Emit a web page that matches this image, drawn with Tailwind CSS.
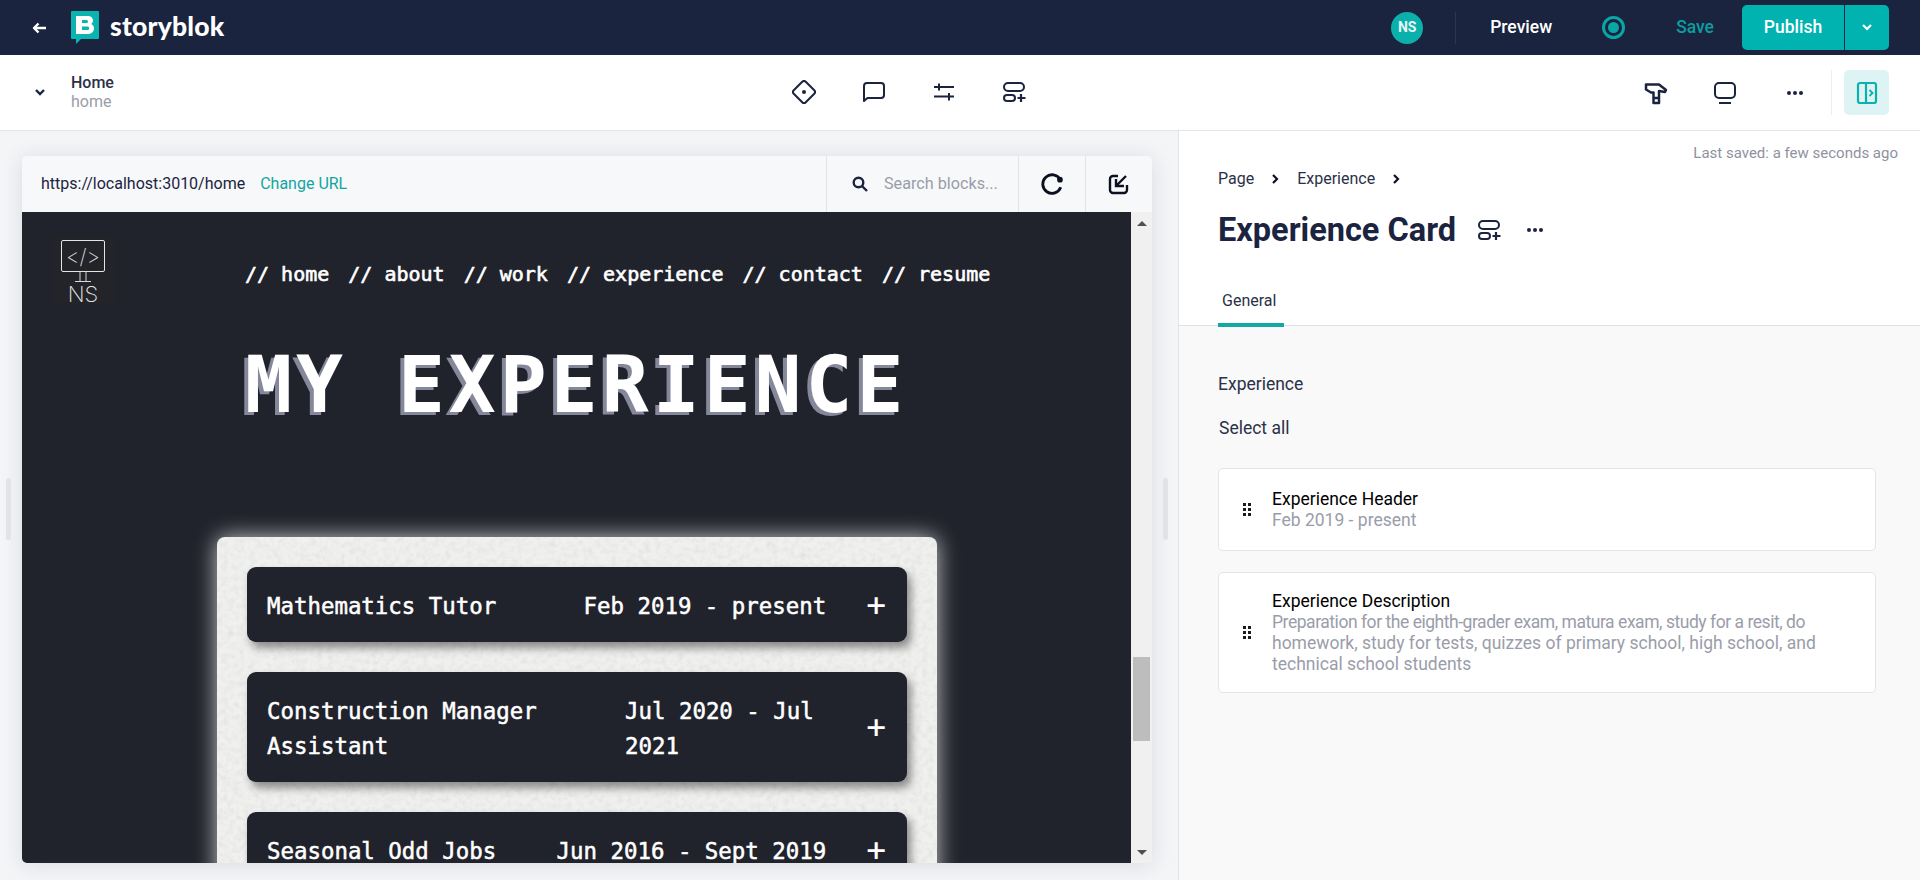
<!DOCTYPE html>
<html lang="en">
<head>
    <meta charset="UTF-8">
    <title>Storyblok - Home</title>
    <script src="https://cdn.jsdelivr.net/npm/@tailwindcss/browser@4"></script>
</head>
<body class="h-[880px] overflow-hidden flex flex-col bg-[#f4f5f7] font-['Roboto',sans-serif] text-[#1b243f]">

    <!-- top bar -->
    <header class="h-[55px] shrink-0 bg-[#1b243f] flex items-center text-white">
        <svg class="ml-[32px] w-[14px] h-[12px]" viewBox="0 0 14 12" fill="none" stroke="white" stroke-width="2.4" stroke-linejoin="round"><path d="M14 6H2M6.500 1.500 2 6l4.500 4.500"/></svg>
        <svg class="ml-[25px] w-[28px] h-[33px]" viewBox="0 0 28 33"><path d="M1 0h26a1 1 0 0 1 1 1v26a1 1 0 0 1-1 1H10l-5 5v-5H1a1 1 0 0 1-1-1V1a1 1 0 0 1 1-1z" fill="#0bb4ae"/><path fill-rule="evenodd" d="M5 5h11.500c3.500 0 5.500 2 5.500 4.500 0 1.500-.7 2.800-1.800 3.500 1.600.7 2.800 2.200 2.800 4.200 0 3-2.300 5.800-6 5.800H5zm6 4v3h4.500a1.500 1.500 0 0 0 0-3zm0 6.500V19h5.500a1.750 1.750 0 0 0 0-3.500z" fill="white"/></svg>
        <span class="ml-[11px] font-['Lato'] font-black text-[26.500px] leading-none tracking-[0.2px] -mt-[2px]">storyblok</span>

        <div class="ml-auto w-[32px] h-[32px] rounded-full bg-[#0bb0ab] flex items-center justify-center text-[14px] font-bold text-[#e6f7f6]">NS</div>
        <div class="ml-[32px] w-px h-[32px] bg-[#2d3650]"></div>
        <span class="ml-[34px] text-[17.500px] font-medium">Preview</span>
        <div class="ml-[50px] w-[23px] h-[23px] rounded-full border-[3px] border-[#0aa5a5] flex items-center justify-center">
            <div class="w-[11px] h-[11px] rounded-full bg-[#0aa5a5]"></div>
        </div>
        <span class="ml-[51px] text-[17.500px] font-medium text-[#0d9c9f]">Save</span>
        <div class="ml-[28px] mr-[31px] h-[45px] flex rounded-[5px] overflow-hidden bg-[#00b3b0]">
            <div class="w-[103px] flex items-center justify-center text-[17.500px] font-medium border-r border-[#1b243f]">Publish</div>
            <div class="w-[44px] flex items-center justify-center">
                <svg class="w-[10px] h-[7px]" viewBox="0 0 10 7" fill="none" stroke="white" stroke-width="2.200"><path d="m1 1 4 4 4-4"/></svg>
            </div>
        </div>
    </header>

    <!-- story bar -->
    <div class="h-[76px] shrink-0 bg-white border-b border-[#e4e5e8] flex items-center relative">
        <svg class="ml-[35px] w-[10px] h-[7px]" viewBox="0 0 10 7" fill="none" stroke="#1b243f" stroke-width="2.400"><path d="m1 1 4 4 4-4"/></svg>
        <div class="ml-[26px] -mt-[2px]">
            <div class="text-[16px] leading-[19px] font-medium text-[#2a3148]">Home</div>
            <div class="text-[16px] leading-[19px] text-[#9a9da9]">home</div>
        </div>
        <div class="ml-[678px] -mt-[2px] flex items-center gap-[46px]">
            <svg class="w-[24px] h-[24px]" viewBox="0 0 24 24" fill="none" stroke="#1b243f" stroke-width="2"><rect x="3.500" y="3.500" width="17" height="17" rx="2.500" transform="rotate(45 12 12)"/><circle cx="12" cy="12" r="2" fill="#1b243f" stroke="none"/></svg>
            <svg class="w-[24px] h-[24px]" viewBox="0 0 24 24" fill="none" stroke="#1b243f" stroke-width="2" stroke-linejoin="round"><path d="M2 21V6a3 3 0 0 1 3-3h14a3 3 0 0 1 3 3v9a3 3 0 0 1-3 3H5.500z"/></svg>
            <svg class="w-[24px] h-[24px]" viewBox="0 0 24 24" fill="none" stroke="#1b243f" stroke-width="2"><path d="M2 7h20M7 3.500v7M2 16.500h20M17 13v7.500"/></svg>
            <svg class="w-[24px] h-[24px]" viewBox="0 0 24 24" fill="none" stroke="#1b243f" stroke-width="2"><rect x="2" y="3" width="20" height="8" rx="4"/><rect x="2" y="15" width="11" height="6" rx="3"/><path d="M19 14v8M15.500 18h8" stroke-width="2.200"/></svg>
        </div>
        <div class="ml-auto mr-[31px] flex items-center">
            <svg class="w-[24px] h-[24px]" viewBox="0 0 24 24" fill="none" stroke="#1b243f" stroke-width="2.500" stroke-linejoin="round"><path d="M2 3.500h13l7 5.500-1 2-6-1v12H9.500V11.500H7L2 8.500zM9.500 17H15" /></svg>
            <svg class="ml-[45px] w-[24px] h-[24px]" viewBox="0 0 24 24" fill="none" stroke="#1b243f" stroke-width="2"><rect x="2" y="2" width="20" height="15" rx="4"/><path d="M6 22h12"/></svg>
            <svg class="ml-[50px] w-[16px] h-[4px]" viewBox="0 0 16 4" fill="#1b243f"><circle cx="2" cy="2" r="2"/><circle cx="8" cy="2" r="2"/><circle cx="14" cy="2" r="2"/></svg>
            <div class="ml-[28px] w-px h-[45px] bg-[#eceef0]"></div>
            <div class="ml-[12px] w-[45px] h-[45px] rounded-[5px] bg-[#def3f3] flex items-center justify-center">
                <svg class="w-[22px] h-[24px]" viewBox="0 0 22 24" fill="none" stroke="#0cb0ad" stroke-width="2.200"><rect x="2" y="2" width="18" height="20" rx="2"/><path d="M10 2v20"/><path d="m13.500 9 3 3-3 3" stroke-width="1.800"/></svg>
            </div>
        </div>
    </div>

    <div class="flex-1 flex min-h-0">
        <!-- preview -->
        <main class="w-[1178px] shrink-0 pl-[22px] pt-[25px] relative">
            <div class="absolute left-[6px] top-[347px] w-[5px] h-[62px] rounded bg-[#e2e3e5]"></div>
            <div class="absolute left-[1163px] top-[347px] w-[5px] h-[62px] rounded bg-[#e2e3e5]"></div>
            <div class="w-[1130px] h-[707px] rounded-[5px] overflow-hidden flex flex-col shadow-[0_2px_22px_rgba(27,36,63,0.12)]">
                <div class="h-[56px] shrink-0 bg-[#f7f8fa] flex items-center text-[16px]">
                    <span class="ml-[19px] text-[#1b243f]">https://localhost:3010/home</span>
                    <span class="ml-[15px] text-[#12a5a0]">Change URL</span>
                    <div class="ml-auto h-full w-[192px] border-l border-[#e2e4e8] flex items-center">
                        <svg class="ml-[25px] w-[16px] h-[16px]" viewBox="0 0 16 16" fill="none" stroke="#1b243f" stroke-width="2.400"><circle cx="6.500" cy="6.500" r="4.800"/><path d="m10 10 5 5"/></svg>
                        <span class="ml-[16px] text-[16.200px] text-[#9a9da9]">Search blocks...</span>
                    </div>
                    <div class="h-full w-[67px] border-l border-[#e2e4e8] flex items-center justify-center">
                        <svg class="w-[24px] h-[24px]" viewBox="0 0 22 22" fill="none" stroke="#0d1020" stroke-width="2.600"><path d="M18.500 7A8.500 8.500 0 1 0 19 14"/><circle cx="18.300" cy="7" r="2.600" fill="#0d1020" stroke="none"/></svg>
                    </div>
                    <div class="h-full w-[67px] border-l border-[#e2e4e8] flex items-center justify-center">
                        <svg class="w-[22px] h-[22px]" viewBox="0 0 22 22" fill="none" stroke="#0d1020" stroke-width="2.400"><path d="M10 3H5a3 3 0 0 0-3 3v11a3 3 0 0 0 3 3h11a3 3 0 0 0 3-3v-5"/><path d="M18 3 9 12M8 6v7h8"/></svg>
                    </div>
                </div>

                <div class="h-[651px] flex">
                    <div class="w-[1109px] bg-[#21232c] overflow-hidden font-['DejaVu_Sans_Mono',monospace] text-white">
                        <div class="flex">
                            <div class="ml-[30px] mt-[23px] w-[62px] h-[70px] bg-[#23232a] flex flex-col items-center pt-[5px]">
                                <div class="w-[44px] h-[32px] border border-[#e4e4e4] rounded-[2px] flex items-center justify-center text-[#d8d8d8] font-['Inter'] font-extralight text-[21px] leading-none">&lt;/&gt;</div>
                                <svg class="w-[16px] h-[10px]" viewBox="0 0 16 10" fill="none" stroke="#d8d8d8"><path d="M5 0v9M11 0v9M0 9.500h16"/></svg>
                                <div class="mt-[1px] font-['Inter'] font-extralight text-[#e4e4e4] text-[22px] leading-[22px]">NS</div>
                            </div>
                            <nav class="ml-[131px] mt-[50px] flex gap-[19px] text-[20px] leading-[24px] font-medium [-webkit-text-stroke:0.6px_white] h-[24px]">
                                <span>// home</span><span>// about</span><span>// work</span><span>// experience</span><span>// contact</span><span>// resume</span>
                            </nav>
                        </div>
                        <h1 class="ml-[223px] mt-[35px] text-[78px] leading-[90px] font-bold tracking-[4px] [text-shadow:-4px_3px_0_#85889a]">MY EXPERIENCE</h1>

                        <div class="ml-[195px] mt-[107px] w-[720px] h-[400px] relative rounded-t-[8px] bg-[#f0f0ef] shadow-[0_0_22px_rgba(255,255,255,0.75)] px-[30px] pt-[30px] flex flex-col gap-[30px]">
                            <svg class="absolute inset-0 w-full h-full rounded-t-[8px] opacity-60" aria-hidden="true">
                                <filter id="concrete"><feTurbulence type="fractalNoise" baseFrequency="0.18" numOctaves="6" seed="11"/><feColorMatrix values="0 0 0 0 0.55  0 0 0 0 0.55  0 0 0 0 0.55  0.6 0.6 0 0 -0.5"/></filter>
                                <rect width="100%" height="100%" filter="url(#concrete)"/>
                            </svg>
                            <div class="relative h-[75px] shrink-0 rounded-[9px] bg-[#21232c] shadow-[4px_6px_9px_rgba(0,0,0,0.42)] px-[20px] pt-[3px] flex items-center text-[22.400px] leading-[35px] font-medium [-webkit-text-stroke:0.5px_white]">
                                <span>Mathematics Tutor</span>
                                <span class="ml-auto">Feb 2019 - present</span>
                                <span class="ml-[38px] -mt-[7px] mr-[-1px] font-['Inter'] font-normal text-[36px] leading-none [-webkit-text-stroke:0]">+</span>
                            </div>
                            <div class="relative h-[110px] shrink-0 rounded-[9px] bg-[#21232c] shadow-[4px_6px_9px_rgba(0,0,0,0.42)] px-[20px] pt-[3px] flex items-center text-[22.400px] leading-[35px] font-medium [-webkit-text-stroke:0.5px_white]">
                                <span class="w-[358px]">Construction Manager Assistant</span>
                                <span class="w-[205px]">Jul 2020 - Jul 2021</span>
                                <span class="ml-auto -mt-[7px] mr-[-1px] font-['Inter'] font-normal text-[36px] leading-none [-webkit-text-stroke:0]">+</span>
                            </div>
                            <div class="relative h-[75px] shrink-0 rounded-[9px] bg-[#21232c] shadow-[4px_6px_9px_rgba(0,0,0,0.42)] px-[20px] pt-[3px] flex items-center text-[22.400px] leading-[35px] font-medium [-webkit-text-stroke:0.5px_white]">
                                <span>Seasonal Odd Jobs</span>
                                <span class="ml-auto">Jun 2016 - Sept 2019</span>
                                <span class="ml-[38px] -mt-[7px] mr-[-1px] font-['Inter'] font-normal text-[36px] leading-none [-webkit-text-stroke:0]">+</span>
                            </div>
                        </div>
                    </div>
                    <!-- iframe scrollbar -->
                    <div class="w-[21px] bg-[#f0f0f0] flex flex-col items-center relative">
                        <svg class="mt-[9px] w-[10px] h-[5px]" viewBox="0 0 10 5" fill="#505050"><path d="M5 0l5 5H0z"/></svg>
                        <div class="mt-[431px] w-[17px] h-[84px] bg-[#bdbdbd]"></div>
                        <svg class="mt-auto mb-[8px] w-[10px] h-[5px]" viewBox="0 0 10 5" fill="#505050"><path d="M5 5l5-5H0z"/></svg>
                    </div>
                </div>
            </div>
        </main>

        <!-- block editor -->
        <aside class="flex-1 border-l border-[#e2e4e8] bg-[#f9f9f9] flex flex-col">
            <div class="h-[195px] shrink-0 bg-white border-b border-[#dfe1e4] relative px-[39px]">
                <div class="absolute right-[22px] top-[13px] text-[15px] leading-[18px] text-[#8f929e]">Last saved: a few seconds ago</div>
                <div class="pt-[38px] flex items-center text-[16px] leading-[20px] text-[#2a3148]">
                    <span>Page</span>
                    <svg class="ml-[18px] w-[7px] h-[10px]" viewBox="0 0 7 10" fill="none" stroke="#0d1020" stroke-width="2.200"><path d="m1 1 4 4-4 4"/></svg>
                    <span class="ml-[18px]">Experience</span>
                    <svg class="ml-[18px] w-[7px] h-[10px]" viewBox="0 0 7 10" fill="none" stroke="#0d1020" stroke-width="2.200"><path d="m1 1 4 4-4 4"/></svg>
                </div>
                <div class="mt-[19px] flex items-center">
                    <h2 class="text-[32.500px] leading-[44px] font-bold text-[#1b243f]">Experience Card</h2>
                    <svg class="ml-[21px] w-[24px] h-[24px]" viewBox="0 0 24 24" fill="none" stroke="#1b243f" stroke-width="2"><rect x="2" y="3" width="20" height="8" rx="4"/><rect x="2" y="15" width="11" height="6" rx="3"/><path d="M19 14v8M15.500 18h8" stroke-width="2.200"/></svg>
                    <svg class="ml-[26px] w-[16px] h-[4px]" viewBox="0 0 16 4" fill="#1b243f"><circle cx="2" cy="2" r="2"/><circle cx="8" cy="2" r="2"/><circle cx="14" cy="2" r="2"/></svg>
                </div>
                <div class="absolute left-[39px] bottom-[-2px] w-[66px] h-[4px] bg-[#12a9a4]"></div>
                <div class="absolute left-[43px] top-[159px] text-[16px] leading-[22px] text-[#2a3148]">General</div>
            </div>

            <div class="px-[39px] text-[17.500px]">
                <div class="mt-[48px] leading-[20px] text-[#2a3148]">Experience</div>
                <div class="mt-[24px] ml-px leading-[20px] text-[#2a3148]">Select all</div>

                <div class="mt-[30px] w-[658px] h-[83px] rounded-[5px] border border-[#e4e5e8] bg-white flex items-center">
                    <svg class="ml-[24px] w-[8px] h-[14px] shrink-0" viewBox="0 0 8 14" fill="#1b1b1b"><rect width="3" height="3"/><rect x="5" width="3" height="3"/><rect y="5" width="3" height="3"/><rect x="5" y="5" width="3" height="3"/><rect y="10" width="3" height="3"/><rect x="5" y="10" width="3" height="3"/></svg>
                    <div class="ml-[21px] leading-[21px]">
                        <div class="text-black">Experience Header</div>
                        <div class="text-[#9a9da9]">Feb 2019 - present</div>
                    </div>
                </div>

                <div class="mt-[21px] w-[658px] h-[121px] rounded-[5px] border border-[#e4e5e8] bg-white flex items-center">
                    <svg class="ml-[24px] w-[8px] h-[14px] shrink-0" viewBox="0 0 8 14" fill="#1b1b1b"><rect width="3" height="3"/><rect x="5" width="3" height="3"/><rect y="5" width="3" height="3"/><rect x="5" y="5" width="3" height="3"/><rect y="10" width="3" height="3"/><rect x="5" y="10" width="3" height="3"/></svg>
                    <div class="ml-[21px] leading-[21px]">
                        <div class="text-black">Experience Description</div>
                        <div class="text-[#9a9da9] whitespace-nowrap">
                            <div class="tracking-[-0.46px]">Preparation for the eighth-grader exam, matura exam, study for a resit, do</div>
                            <div>homework, study for tests, quizzes of primary school, high school, and</div>
                            <div>technical school students</div>
                        </div>
                    </div>
                </div>
            </div>
        </aside>
    </div>
</body>
</html>
